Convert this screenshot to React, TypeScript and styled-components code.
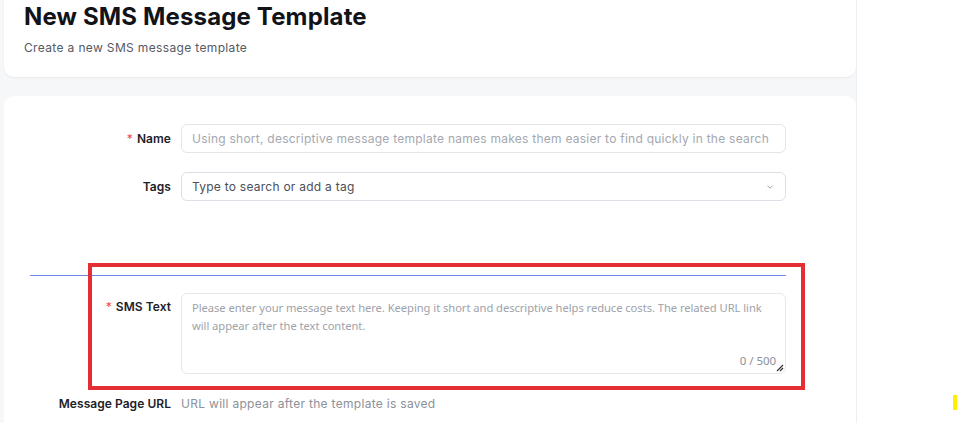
import * as React from "react";
import styled, { createGlobalStyle } from "styled-components";

const GlobalStyle = createGlobalStyle`
  html, body {
    margin: 0;
    padding: 0;
    background: #ffffff;
    font-family: "Inter", "Open Sans", sans-serif;
  }
  * { box-sizing: border-box; }
`;

const Page = styled.div`
  width: 857px;
  height: 423px;
  background: #f6f7f9;
  padding-left: 4px;
  border-right: 1px solid #eceef1;
  overflow: hidden;
  position: relative;
`;

const HeaderCard = styled.div`
  height: 77px;
  background: #ffffff;
  border-radius: 0 0 10px 10px;
  box-shadow: 0 1px 2px rgba(0, 0, 0, 0.06);
  padding: 3px 20px 0 20px;
`;

const Title = styled.h1`
  margin: 0;
  font-size: 24px;
  line-height: 28px;
  font-weight: 700;
  color: #111318;
  letter-spacing: 0.15px;
`;

const Subtitle = styled.p`
  margin: 9px 0 0 0;
  font-size: 12px;
  line-height: 16px;
  color: #555a63;
  letter-spacing: 0.35px;
`;

const FormCard = styled.div`
  position: relative;
  margin-top: 19px;
  height: 400px;
  background: #ffffff;
  border-radius: 10px 10px 0 0;
  padding-top: 28px;
`;

const Row = styled.div<{ $top?: number; $align?: string }>`
  display: grid;
  grid-template-columns: 150px 605px;
  column-gap: 10px;
  padding-left: 17px;
  margin-top: ${(p) => p.$top ?? 0}px;
  align-items: ${(p) => p.$align ?? "center"};
`;

const Label = styled.label<{ $pad?: number }>`
  text-align: right;
  font-size: 12px;
  font-weight: 600;
  color: #1d2129;
  letter-spacing: 0.05px;
  padding-top: ${(p) => p.$pad ?? 0}px;
  white-space: nowrap;
`;

const Star = styled.span`
  color: #f0484c;
  margin-right: 4px;
  font-weight: 400;
`;

const Field = styled.div`
  height: 29px;
  border: 1px solid #e3e5e9;
  border-radius: 6px;
  display: flex;
  align-items: center;
  padding: 0 11px 0 10px;
  font-size: 12px;
  letter-spacing: 0.25px;
  color: #a4a8b0;
  white-space: nowrap;
  overflow: hidden;
`;

const SelectField = styled(Field)`
  justify-content: space-between;
  color: #4a4f58;
  border-color: #dcdfe5;
`;

const Divider = styled.hr`
  margin: 74px 0 0 26px;
  width: 756px;
  height: 1px;
  border: none;
  background-color: #6f86ea;
`;

const TextArea = styled.div`
  position: relative;
  height: 81px;
  border: 1px solid #e6e8ec;
  border-radius: 6px;
  padding: 5px 10px;
  font-family: "Noto Sans", "Open Sans", sans-serif;
  font-size: 11.2px;
  line-height: 18px;
  letter-spacing: -0.05px;
  color: #9ea2aa;
`;

const Counter = styled.span`
  position: absolute;
  right: 9px;
  bottom: 3px;
  font-family: "Noto Sans", sans-serif;
  font-size: 11.5px;
  color: #8c9098;
`;

const Grip = styled.svg`
  position: absolute;
  right: 1px;
  bottom: 1px;
`;

const UrlText = styled.span`
  font-size: 12px;
  letter-spacing: 0.3px;
  color: #8d9199;
`;

const Annotation = styled.div`
  position: absolute;
  left: 84px;
  top: 167px;
  width: 717px;
  height: 127px;
  border: 4px solid #e32f33;
  pointer-events: none;
`;

const Marker = styled.div`
  position: absolute;
  left: 953px;
  top: 395px;
  width: 4px;
  height: 15px;
  background: #ffee00;
`;

export default function App() {
  return (
    <>
      <GlobalStyle />
      <Page>
        <HeaderCard>
          <Title>New SMS Message Template</Title>
          <Subtitle>Create a new SMS message template</Subtitle>
        </HeaderCard>
        <FormCard>
          <Row>
            <Label>
              <Star>*</Star>Name
            </Label>
            <Field>
              Using short, descriptive message template names makes them easier to find quickly in the search
            </Field>
          </Row>
          <Row $top={19}>
            <Label>Tags</Label>
            <SelectField>
              <span>Type to search or add a tag</span>
              <svg width="8" height="6" viewBox="0 0 8 6">
                <path d="M1.5 1.8 L4 4.2 L6.5 1.8" fill="none" stroke="#9ea2aa" strokeWidth="1" />
              </svg>
            </SelectField>
          </Row>
          <Divider />
          <Row $top={17} $align="start">
            <Label $pad={6}>
              <Star>*</Star>SMS Text
            </Label>
            <TextArea>
              Please enter your message text here. Keeping it short and descriptive helps reduce costs. The related URL link
              will appear after the text content.
              <Counter>0 / 500</Counter>
              <Grip width="9" height="9" viewBox="0 0 9 9">
                <path d="M8 2 L2 8 M8 5 L5 8" stroke="#333" strokeWidth="1.2" />
              </Grip>
            </TextArea>
          </Row>
          <Row $top={22}>
            <Label>Message Page URL</Label>
            <UrlText>URL will appear after the template is saved</UrlText>
          </Row>
          <Annotation />
        </FormCard>
      </Page>
      <Marker />
    </>
  );
}
